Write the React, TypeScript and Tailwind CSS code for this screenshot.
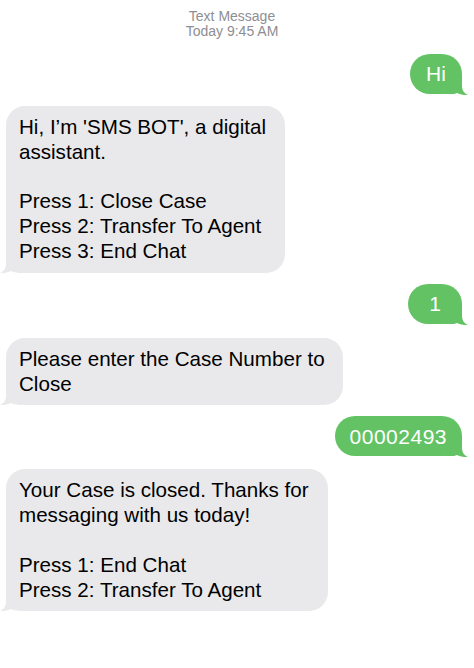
import React from "react";

type Msg = { from: "me" | "bot"; lines: string[]; width?: string; mt: string; extra?: string };

const messages: Msg[] = [
  { from: "me", lines: ["Hi"], mt: "mt-[15px]", extra: "min-w-[52px]" },
  {
    from: "bot",
    lines: ["Hi, I\u2019m 'SMS BOT', a digital", "assistant.", "", "Press 1: Close Case", "Press 2: Transfer To Agent", "Press 3: End Chat"],
    width: "w-[279px]",
    mt: "mt-[12px]",
  },
  { from: "me", lines: ["1"], mt: "mt-[11px]", extra: "min-w-[54px]" },
  {
    from: "bot",
    lines: ["Please enter the Case Number to", "Close"],
    width: "w-[337px]",
    mt: "mt-[14px]",
  },
  { from: "me", lines: ["00002493"], mt: "mt-[11px]", extra: "px-[15px] tracking-[0.5px]" },
  {
    from: "bot",
    lines: ["Your Case is closed. Thanks for", "messaging with us today!", "", "Press 1: End Chat", "Press 2: Transfer To Agent"],
    width: "w-[322px]",
    mt: "mt-[13px]",
  },
];

const LeftTail = () => (
  <svg className="absolute left-[-6px] bottom-0" width="24" height="22" viewBox="0 0 24 22">
    <path d="M6 0 L6 12 C6 17 4.5 20 0 22 C4 22.3 8 21.5 11 20 C14 21.5 18 22 24 22 L24 0 Z" fill="#e9e9eb" />
  </svg>
);

const RightTail = () => (
  <svg className="absolute right-[-6px] bottom-[-1px]" width="24" height="22" viewBox="0 0 24 22">
    <path d="M18 0 L18 12 C18 17 19.5 20 24 22 C20 22.3 16 21.5 13 20 C10 21.5 6 21 0 21 L0 0 Z" fill="#63c364" />
  </svg>
);

export default function App() {
  return (
    <div className="w-[474px] h-[668px] bg-white overflow-hidden font-['Liberation_Sans',Arial,sans-serif]">
      <div className="pt-[9px] pr-[10px] text-center text-[14px] leading-[15px] text-[#8e8e93]">
        <div>Text Message</div>
        <div>Today 9:45 AM</div>
      </div>

      {messages.map((m, i) =>
        m.from === "me" ? (
          <div key={i} className={`flex justify-end pr-[12px] ${m.mt}`}>
            <div
              className={`relative h-[40px] rounded-full bg-[#63c364] text-white text-[21px] flex items-center justify-center px-[14px] ${m.extra ?? ""}`}
            >
              <span className="relative z-10">{m.lines[0]}</span>
              <RightTail />
            </div>
          </div>
        ) : (
          <div key={i} className={`flex pl-[6px] ${m.mt}`}>
            <div
              className={`relative rounded-[19px] bg-[#e9e9eb] text-black text-[20.6px] leading-[24.8px] pl-[13px] pr-[10px] py-[9px] ${m.width}`}
            >
              <LeftTail />
              <div className="relative z-10">
                {m.lines.map((l, j) => (
                  <div key={j} className="h-[24.8px] whitespace-nowrap">
                    {l}
                  </div>
                ))}
              </div>
            </div>
          </div>
        )
      )}
    </div>
  );
}
